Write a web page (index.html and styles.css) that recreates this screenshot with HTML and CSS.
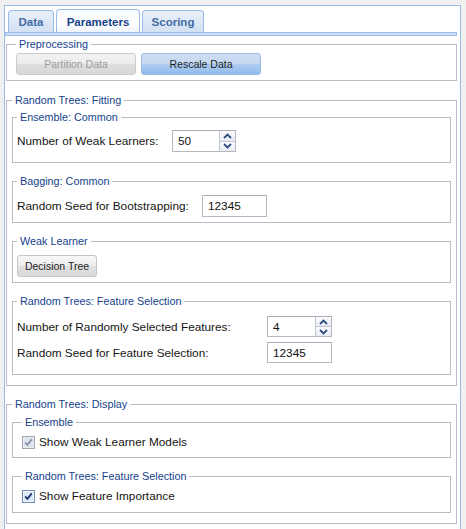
FILE: index.html
```html
<!DOCTYPE html>
<html lang="en">
<head>
<meta charset="utf-8">
<title>Random Trees Parameters</title>
<link rel="stylesheet" href="styles.css">
</head>
<body>
<div class="panel">
  <div class="tabbar">
    <div class="tab tab-data">Data</div>
    <div class="tab tab-params active">Parameters</div>
    <div class="tab tab-scoring">Scoring</div>
  </div>
  <div class="band"></div>
  <div class="content">
    <fieldset class="group pre">
      <legend>Preprocessing</legend>
      <div class="btnrow">
        <button class="btn btn-disabled">Partition Data</button>
        <button class="btn btn-blue">Rescale Data</button>
      </div>
    </fieldset>

    <fieldset class="group fitting">
      <legend>Random Trees: Fitting</legend>

      <fieldset class="inner fs-ens">
        <legend>Ensemble: Common</legend>
        <div class="row row-22">
          <span class="label lw155">Number of Weak Learners:</span>
          <div class="spinner sw64 h22">
            <span class="spin-val">50</span>
            <span class="spin-btns">
              <span class="spin-up"><svg width="9" height="6" viewBox="0 0 9 6"><polyline points="1,5 4.5,1.5 8,5" fill="none" stroke="#2f4f80" stroke-width="1.8"/></svg></span>
              <span class="spin-dn"><svg width="9" height="6" viewBox="0 0 9 6"><polyline points="1,1 4.5,4.5 8,1" fill="none" stroke="#2f4f80" stroke-width="1.8"/></svg></span>
            </span>
          </div>
        </div>
      </fieldset>

      <fieldset class="inner fs-bag">
        <legend>Bagging: Common</legend>
        <div class="row row-22">
          <span class="label lw185">Random Seed for Bootstrapping:</span>
          <div class="textbox sw65 h22">12345</div>
        </div>
      </fieldset>

      <fieldset class="inner fs-wl">
        <legend>Weak Learner</legend>
        <div class="wl-row">
          <button class="btn btn-gray">Decision Tree</button>
        </div>
      </fieldset>

      <fieldset class="inner fs-fsel">
        <legend>Random Trees: Feature Selection</legend>
        <div class="row row-21 first">
          <span class="label lw250">Number of Randomly Selected Features:</span>
          <div class="spinner sw65 h21">
            <span class="spin-val">4</span>
            <span class="spin-btns">
              <span class="spin-up"><svg width="9" height="6" viewBox="0 0 9 6"><polyline points="1,5 4.5,1.5 8,5" fill="none" stroke="#2f4f80" stroke-width="1.8"/></svg></span>
              <span class="spin-dn"><svg width="9" height="6" viewBox="0 0 9 6"><polyline points="1,1 4.5,4.5 8,1" fill="none" stroke="#2f4f80" stroke-width="1.8"/></svg></span>
            </span>
          </div>
        </div>
        <div class="row row-21 second">
          <span class="label lw250">Random Seed for Feature Selection:</span>
          <div class="textbox sw65 h21">12345</div>
        </div>
      </fieldset>
    </fieldset>

    <fieldset class="group display">
      <legend>Random Trees: Display</legend>

      <fieldset class="inner fs-dens">
        <legend class="indent">Ensemble</legend>
        <label class="check-row">
          <svg class="cb" width="13" height="13" viewBox="0 0 13 13">
            <rect x="0.5" y="0.5" width="12" height="12" fill="#e9ecf1" stroke="#a3a9b3"/>
            <rect x="2" y="2" width="9" height="9" fill="#dfe4ec"/>
            <polyline points="3.2,6.4 5.4,8.8 9.8,3.4" fill="none" stroke="#8594ad" stroke-width="1.8"/>
          </svg>
          <span>Show Weak Learner Models</span>
        </label>
      </fieldset>

      <fieldset class="inner fs-dfs">
        <legend class="indent">Random Trees: Feature Selection</legend>
        <label class="check-row">
          <svg class="cb" width="13" height="13" viewBox="0 0 13 13">
            <rect x="0.5" y="0.5" width="12" height="12" fill="#f4f8fd" stroke="#6f8db5"/>
            <rect x="2" y="2" width="9" height="9" fill="#dce8f7"/>
            <polyline points="3.2,6.4 5.4,8.8 9.8,3.4" fill="none" stroke="#1d3670" stroke-width="1.8"/>
          </svg>
          <span>Show Feature Importance</span>
        </label>
      </fieldset>
    </fieldset>
  </div>
</div>
</body>
</html>
```
FILE: styles.css
```css
* { box-sizing: border-box; }

html, body { height: 100%; }

body {
  margin: 0;
  background: #f0f0f0;
  font-family: "Liberation Sans", Arial, sans-serif;
  font-size: 11.8px;
  color: #151515;
  overflow: hidden;
}

.panel {
  margin: 5px 5px 0 4px;
  height: 524px;
  border: 1px solid #99bbe8;
  border-bottom: 0;
  background: #fff;
}

/* Tabs */
.tabbar {
  display: flex;
  align-items: flex-end;
  gap: 2px;
  height: 26px;
  padding: 3px 0 0 3px;
}

.tab {
  height: 22px;
  border: 1px solid #99bbe8;
  border-bottom: 0;
  border-radius: 4px 4px 0 0;
  background: linear-gradient(#e9f0fa, #d3e1f3);
  color: #416ca4;
  font-weight: bold;
  font-size: 11.5px;
  line-height: 22px;
  text-align: center;
}

.tab.active {
  height: 23px;
  line-height: 24px;
  background: linear-gradient(#f6f9fd, #ffffff 60%, #eef4fb);
  color: #15428b;
}

.tab-data { width: 46px; }
.tab-params { width: 84px; }
.tab-scoring { width: 62px; }

.band {
  height: 4px;
  margin-right: 3px;
  border: 1px solid #99bbe8;
  background: #cfe0f5;
}

.content {
  padding: 0 3px 0 1px;
}

/* Fieldsets */
fieldset {
  margin: 0;
  min-width: 0;
  border: 1px solid #b9bcc6;
}

legend {
  padding: 0 3px;
  font-size: 10.8px;
  line-height: 14px;
  color: #15428b;
}

legend.indent { margin-left: 5px; }

.group { padding: 0 5px 10px 5px; }

.pre {
  margin-top: 1px;
  padding: 0 5px 5px 9px;
}

.fitting { margin-top: 12px; }
.display { margin-top: 11px; }

.inner { padding: 0 4px; }

.fs-ens { margin-top: 3px; padding-bottom: 10px; }
.fs-bag { margin-top: 11px; padding-bottom: 5px; }
.fs-wl { margin-top: 11px; padding-bottom: 5px; }
.fs-fsel { margin-top: 11px; padding-bottom: 11px; }
.fs-dens { margin-top: 4px; padding-bottom: 6px; }
.fs-dfs { margin-top: 11px; padding-bottom: 7px; }

/* Buttons */
.btnrow {
  display: flex;
  gap: 5px;
  margin-top: 2px;
}

.btn {
  height: 22px;
  padding: 0;
  border-radius: 3px;
  font-family: "Liberation Sans", Arial, sans-serif;
  font-size: 10.5px;
  color: #1e1e1e;
}

.btn-disabled {
  width: 120px;
  border: 1px solid #cdcdcd;
  background: linear-gradient(#f2f2f2 0%, #ebebeb 50%, #dedede 52%, #d8d8d8 100%);
  color: #9c9c9c;
}

.btn-blue {
  width: 120px;
  border: 1px solid #9dbbe4;
  background: linear-gradient(#cfdff3 0%, #c3d7f0 50%, #aecbef 52%, #9ac1ee 85%, #8cb8ec 100%);
}

.btn-gray {
  width: 80px;
  border: 1px solid #c5c5c5;
  background: linear-gradient(#f8f8f8 0%, #ececec 50%, #e0e0e0 52%, #d9d9d9 100%);
}

.wl-row { margin-top: 7px; display: flex; }

/* Rows */
.row {
  display: flex;
  align-items: center;
}

.fs-ens .row { margin-top: 6px; }
.fs-bag .row { margin-top: 7px; }
.fs-fsel .row.first { margin-top: 8px; }
.fs-fsel .row.second { margin-top: 5px; }

.label { flex: none; white-space: nowrap; }
.lw155 { width: 155px; }
.lw185 { width: 185px; }
.lw250 { width: 250px; }

.h22 { height: 22px; }
.h21 { height: 21px; }
.sw64 { width: 64px; }
.sw65 { width: 65px; }

.textbox,
.spinner {
  border: 1px solid #b5b8c2;
  border-top-color: #a9acb6;
  background: #fff;
  color: #111;
}

.textbox {
  padding-left: 5px;
  display: flex;
  align-items: center;
}

.spinner {
  display: flex;
}

.spin-val {
  flex: 1;
  padding-left: 5px;
  display: flex;
  align-items: center;
}

.spin-btns {
  width: 16px;
  display: flex;
  flex-direction: column;
  border-left: 1px solid #c3c6ce;
}

.spin-up,
.spin-dn {
  flex: 1;
  display: flex;
  align-items: center;
  justify-content: center;
  background: linear-gradient(#fbfcfd, #e8ecf2);
}

.spin-up { border-bottom: 1px solid #c3c6ce; }

/* Checkboxes */
.check-row {
  display: flex;
  align-items: center;
  height: 18px;
  margin-top: 4px;
}

.cb {
  flex: none;
  margin-left: 5px;
  margin-right: 4px;
}
```
